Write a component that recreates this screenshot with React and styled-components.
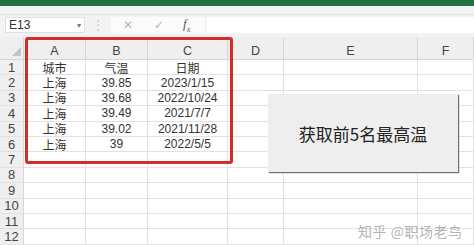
import React from 'react'
import styled, { createGlobalStyle } from 'styled-components';

const GlobalStyle = createGlobalStyle`
  html, body {
    margin: 0;
    padding: 0;
    background: #fff;
    overflow: hidden;
  }
  body {
    font-family: "Liberation Sans", "Noto Sans CJK SC", sans-serif;
  }
`

const cols = ['A', 'B', 'C', 'D', 'E', 'F'];
const widths = '24px 62px 62px 80px 56px 134px 1fr';

const rows = [
  ['城市', '气温', '日期'],
  ['上海', '39.85', '2023/1/15'],
  ['上海', '39.68', '2022/10/24'],
  ['上海', '39.49', '2021/7/7'],
  ['上海', '39.02', '2021/11/28'],
  ['上海', '39', '2022/5/5'],
];

export default function App() {
  const body = [];
  for (let r = 1; r <= 12; r++) {
    const data = rows[r - 1] || [];
    body.push(<RowHead key={'h' + r}>{r}</RowHead>);
    for (let c = 0; c < 6; c++) {
      body.push(<Cell key={r + '-' + c}>{data[c] || ''}</Cell>);
    }
  }

  return (
    <Page>
      <GlobalStyle />
      <TitleBar />
      <Ribbon />
      <FormulaBar>
        <NameBox>
          <span>E13</span>
          <Caret>▾</Caret>
        </NameBox>
        <Dots>⋮</Dots>
        <Actions>
          <ActionIcon>✕</ActionIcon>
          <ActionIcon>✓</ActionIcon>
          <Fx>f<sub>x</sub></Fx>
        </Actions>
        <FormulaInput />
      </FormulaBar>
      <Sheet>
        <Grid>
          <Corner>
            <svg width="9" height="9" viewBox="0 0 9 9">
              <path d="M9 0 L9 9 L0 9 Z" fill="#c4c4c4" />
            </svg>
          </Corner>
          {cols.map(c => <ColHead key={c}>{c}</ColHead>)}
          {body}
        </Grid>
        <Highlight />
        <ActionButton>获取前5名最高温</ActionButton>
        <Watermark>知乎 @职场老鸟</Watermark>
      </Sheet>
    </Page>
  )
}

const Page = styled.div`
  width: 474px;
  height: 245px;
  overflow: hidden;
  background: #fff;
`

const TitleBar = styled.div`
  height: 6px;
  background: #217346;
`

const Ribbon = styled.div`
  height: 8px;
  background: #f3f3f3;
  border-bottom: 1px solid #e2e2e2;
`

const FormulaBar = styled.div`
  height: 20px;
  padding: 2px 0 0 5px;
  display: flex;
  align-items: stretch;
  background: #f3f3f3;
`

const NameBox = styled.div`
  width: 80px;
  height: 16px;
  box-sizing: border-box;
  background: #fff;
  border: 1px solid #e0e0e0;
  display: flex;
  align-items: center;
  justify-content: space-between;
  padding: 0 3px 0 3px;
  font-size: 12px;
  color: #333;
`

const Caret = styled.span`
  font-size: 8px;
  color: #777;
`

const Dots = styled.div`
  width: 26px;
  text-align: center;
  color: #c8c8c8;
  font-size: 12px;
  line-height: 16px;
`

const Actions = styled.div`
  width: 94px;
  height: 16px;
  background: #fbfbfb;
  display: flex;
  align-items: center;
  padding-left: 10px;
  box-sizing: border-box;
  gap: 17px;
`

const ActionIcon = styled.span`
  width: 14px;
  text-align: center;
  font-size: 12px;
  color: #b8b8b8;
  font-family: "DejaVu Sans", sans-serif;
`

const Fx = styled.span`
  font-family: "Liberation Serif", serif;
  font-style: italic;
  font-size: 13px;
  color: #555;
  sub {
    font-size: 8px;
  }
`

const FormulaInput = styled.div`
  flex: 1;
  height: 16px;
  margin-left: 2px;
  background: #fff;
`

const Sheet = styled.div`
  position: relative;
`

const Grid = styled.div`
  display: grid;
  grid-template-columns: ${widths};
  grid-template-rows: 23px repeat(12, 15.4px);
`

const ColHead = styled.div`
  background: #efefef;
  border-right: 1px solid #d6d6d6;
  border-bottom: 1px solid #d6d6d6;
  display: flex;
  align-items: flex-end;
  justify-content: center;
  padding-bottom: 1px;
  font-size: 12.5px;
  color: #444;
  box-sizing: border-box;
`

const Corner = styled(ColHead)`
  justify-content: flex-end;
  padding: 0 2px 3px 0;
`

const RowHead = styled.div`
  background: #efefef;
  border-right: 1px solid #d6d6d6;
  border-bottom: 1px solid #e2e2e2;
  font-size: 13px;
  color: #444;
  display: flex;
  align-items: center;
  justify-content: center;
  box-sizing: border-box;
`

const Cell = styled.div`
  border-right: 1px solid #e2e2e2;
  border-bottom: 1px solid #e2e2e2;
  font-size: 12px;
  color: #333;
  display: flex;
  align-items: center;
  justify-content: center;
  box-sizing: border-box;
  white-space: nowrap;
`

const Highlight = styled.div`
  position: absolute;
  left: 25px;
  top: 0;
  width: 208px;
  height: 127px;
  box-sizing: border-box;
  border: 3px solid #d42b2b;
  border-radius: 3px;
  pointer-events: none;
`

const ActionButton = styled.div`
  position: absolute;
  left: 268px;
  top: 57px;
  width: 190px;
  height: 78px;
  background: #eeeeee;
  box-shadow: 1px 1px 1px #6e6e6e;
  display: flex;
  align-items: center;
  justify-content: center;
  font-family: "Noto Sans CJK SC", sans-serif;
  font-size: 17px;
  color: #222;
`

const Watermark = styled.div`
  position: absolute;
  left: 358px;
  top: 184px;
  font-family: "Noto Sans CJK SC", sans-serif;
  font-size: 14px;
  color: rgba(160, 160, 160, 0.8);
  letter-spacing: 0.5px;
`
